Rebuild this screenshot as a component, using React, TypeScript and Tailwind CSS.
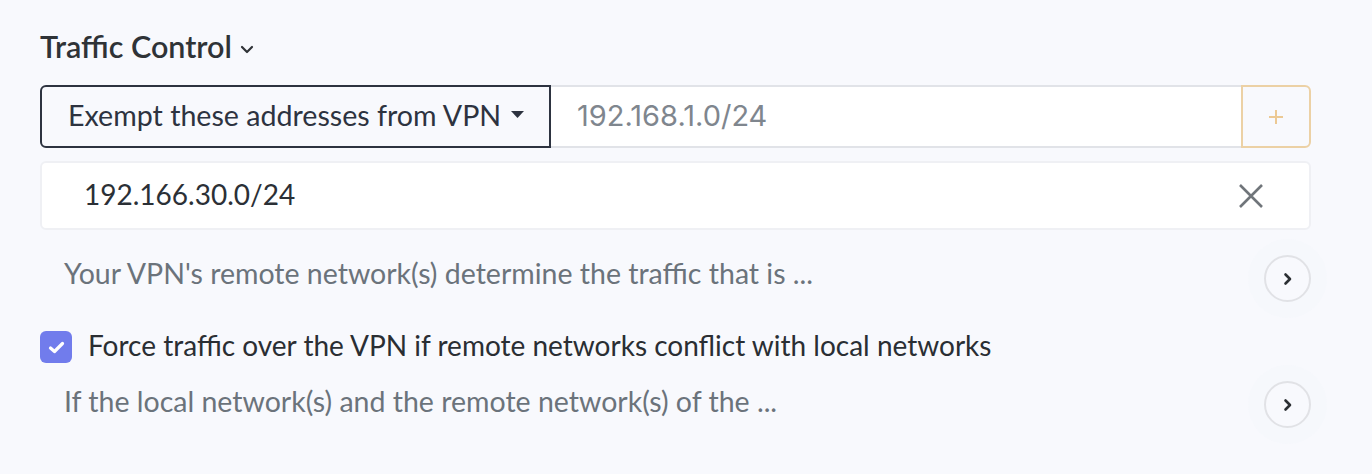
import React, { useState } from 'react';

function ChevronCircle() {
  return (
    <button className="flex h-[47px] w-[47px] shrink-0 items-center justify-center rounded-full border-2 border-[#e1e2e6] bg-[#f8f9fd] shadow-[0_0_0_16px_rgba(240,242,248,0.18)]">
      <svg width="10" height="14" viewBox="0 0 10 14" fill="none">
        <path d="M2.5 2.5 L7 7 L2.5 11.5" stroke="#2b2f33" strokeWidth="2.6" strokeLinecap="round" strokeLinejoin="round" />
      </svg>
    </button>
  );
}

export default function App() {
  const [force, setForce] = useState(true);

  return (
    <div className="min-h-screen bg-[#f8f9fd] pl-10 pr-[61px] pt-[30px] font-['Lato',sans-serif]">
      {/* header */}
      <div className="flex h-[34px] items-center gap-2 text-[30.5px] font-semibold text-[#2f3337]">
        <span>Traffic Control</span>
        <svg width="14" height="10" viewBox="0 0 14 10" fill="none" className="mt-1">
          <path d="M2 3 L7 8 L12 3" stroke="#2f3337" strokeWidth="2.2" strokeLinecap="round" strokeLinejoin="round" />
        </svg>
      </div>

      {/* exempt input */}
      <div className="mt-[21px] flex h-[63px]">
        <button className="flex w-[511px] shrink-0 items-center gap-[10px] rounded-l-[6px] border-2 border-[#2d3340] pb-[4px] pl-[26px] text-[28.6px] leading-[34px] text-[#2d3340]">
          <span>Exempt these addresses from VPN</span>
          <svg width="13" height="7" viewBox="0 0 13 7">
            <path d="M0 0 H13 L6.5 7 Z" fill="#2d3340" />
          </svg>
        </button>
        <div className="flex flex-1 items-center border-y-2 border-[#e1e3e8] bg-white pb-[2px] pl-[26px]">
          <input
            className="w-full bg-transparent font-['Inter',sans-serif] text-[29px] text-[#2d3340] outline-none placeholder:text-[#7f868e]"
            placeholder="192.168.1.0/24"
          />
        </div>
        <button className="flex w-[70px] shrink-0 items-center justify-center rounded-r-[6px] border-2 border-[#ecd1a5] bg-[#f8f9fd]">
          <svg width="16" height="16" viewBox="0 0 16 16">
            <path d="M8 1 V15 M1 8 H15" stroke="#ecc994" strokeWidth="2" />
          </svg>
        </button>
      </div>

      {/* address row */}
      <div className="mt-[13px] flex h-[69px] items-center justify-between rounded-[6px] border-2 border-[#eff0f4] bg-white pl-[42px] pr-[45px]">
        <span className="pb-[4px] text-[28px] text-[#2b3036]">192.166.30.0/24</span>
        <svg width="26" height="26" viewBox="0 0 26 26">
          <path d="M2 2 L24 24 M24 2 L2 24" stroke="#70757a" strokeWidth="2.6" />
        </svg>
      </div>

      {/* remote networks description */}
      <div className="mt-[25px] flex items-start justify-between">
        <p className="pl-6 pt-[1px] text-[28.5px] leading-[34px] text-[#6b737b]">
          Your VPN's remote network(s) determine the traffic that is ...
        </p>
        <ChevronCircle />
      </div>

      {/* force traffic */}
      <label className="mt-[29px] flex h-[32px] cursor-pointer items-center gap-4">
        <span
          onClick={() => setForce(!force)}
          className={`flex h-[32px] w-[32px] shrink-0 items-center justify-center rounded-[6px] ${force ? 'bg-[#717cec]' : 'border-2 border-[#c9ccd4] bg-white'}`}
        >
          {force && (
            <svg width="17" height="13" viewBox="0 0 17 13" fill="none">
              <path d="M2.5 7 L6.5 10.5 L14.5 2.5" stroke="white" strokeWidth="3.2" strokeLinecap="round" strokeLinejoin="round" />
            </svg>
          )}
        </span>
        <span className="pb-[4px] text-[28px] leading-[32px] text-[#2a2e33]">
          Force traffic over the VPN if remote networks conflict with local networks
        </span>
      </label>

      <div className="mt-[18px] flex items-start justify-between">
        <p className="pl-6 pt-[3px] text-[28.5px] leading-[34px] text-[#6b737b]">
          If the local network(s) and the remote network(s) of the ...
        </p>
        <ChevronCircle />
      </div>
    </div>
  );
}
